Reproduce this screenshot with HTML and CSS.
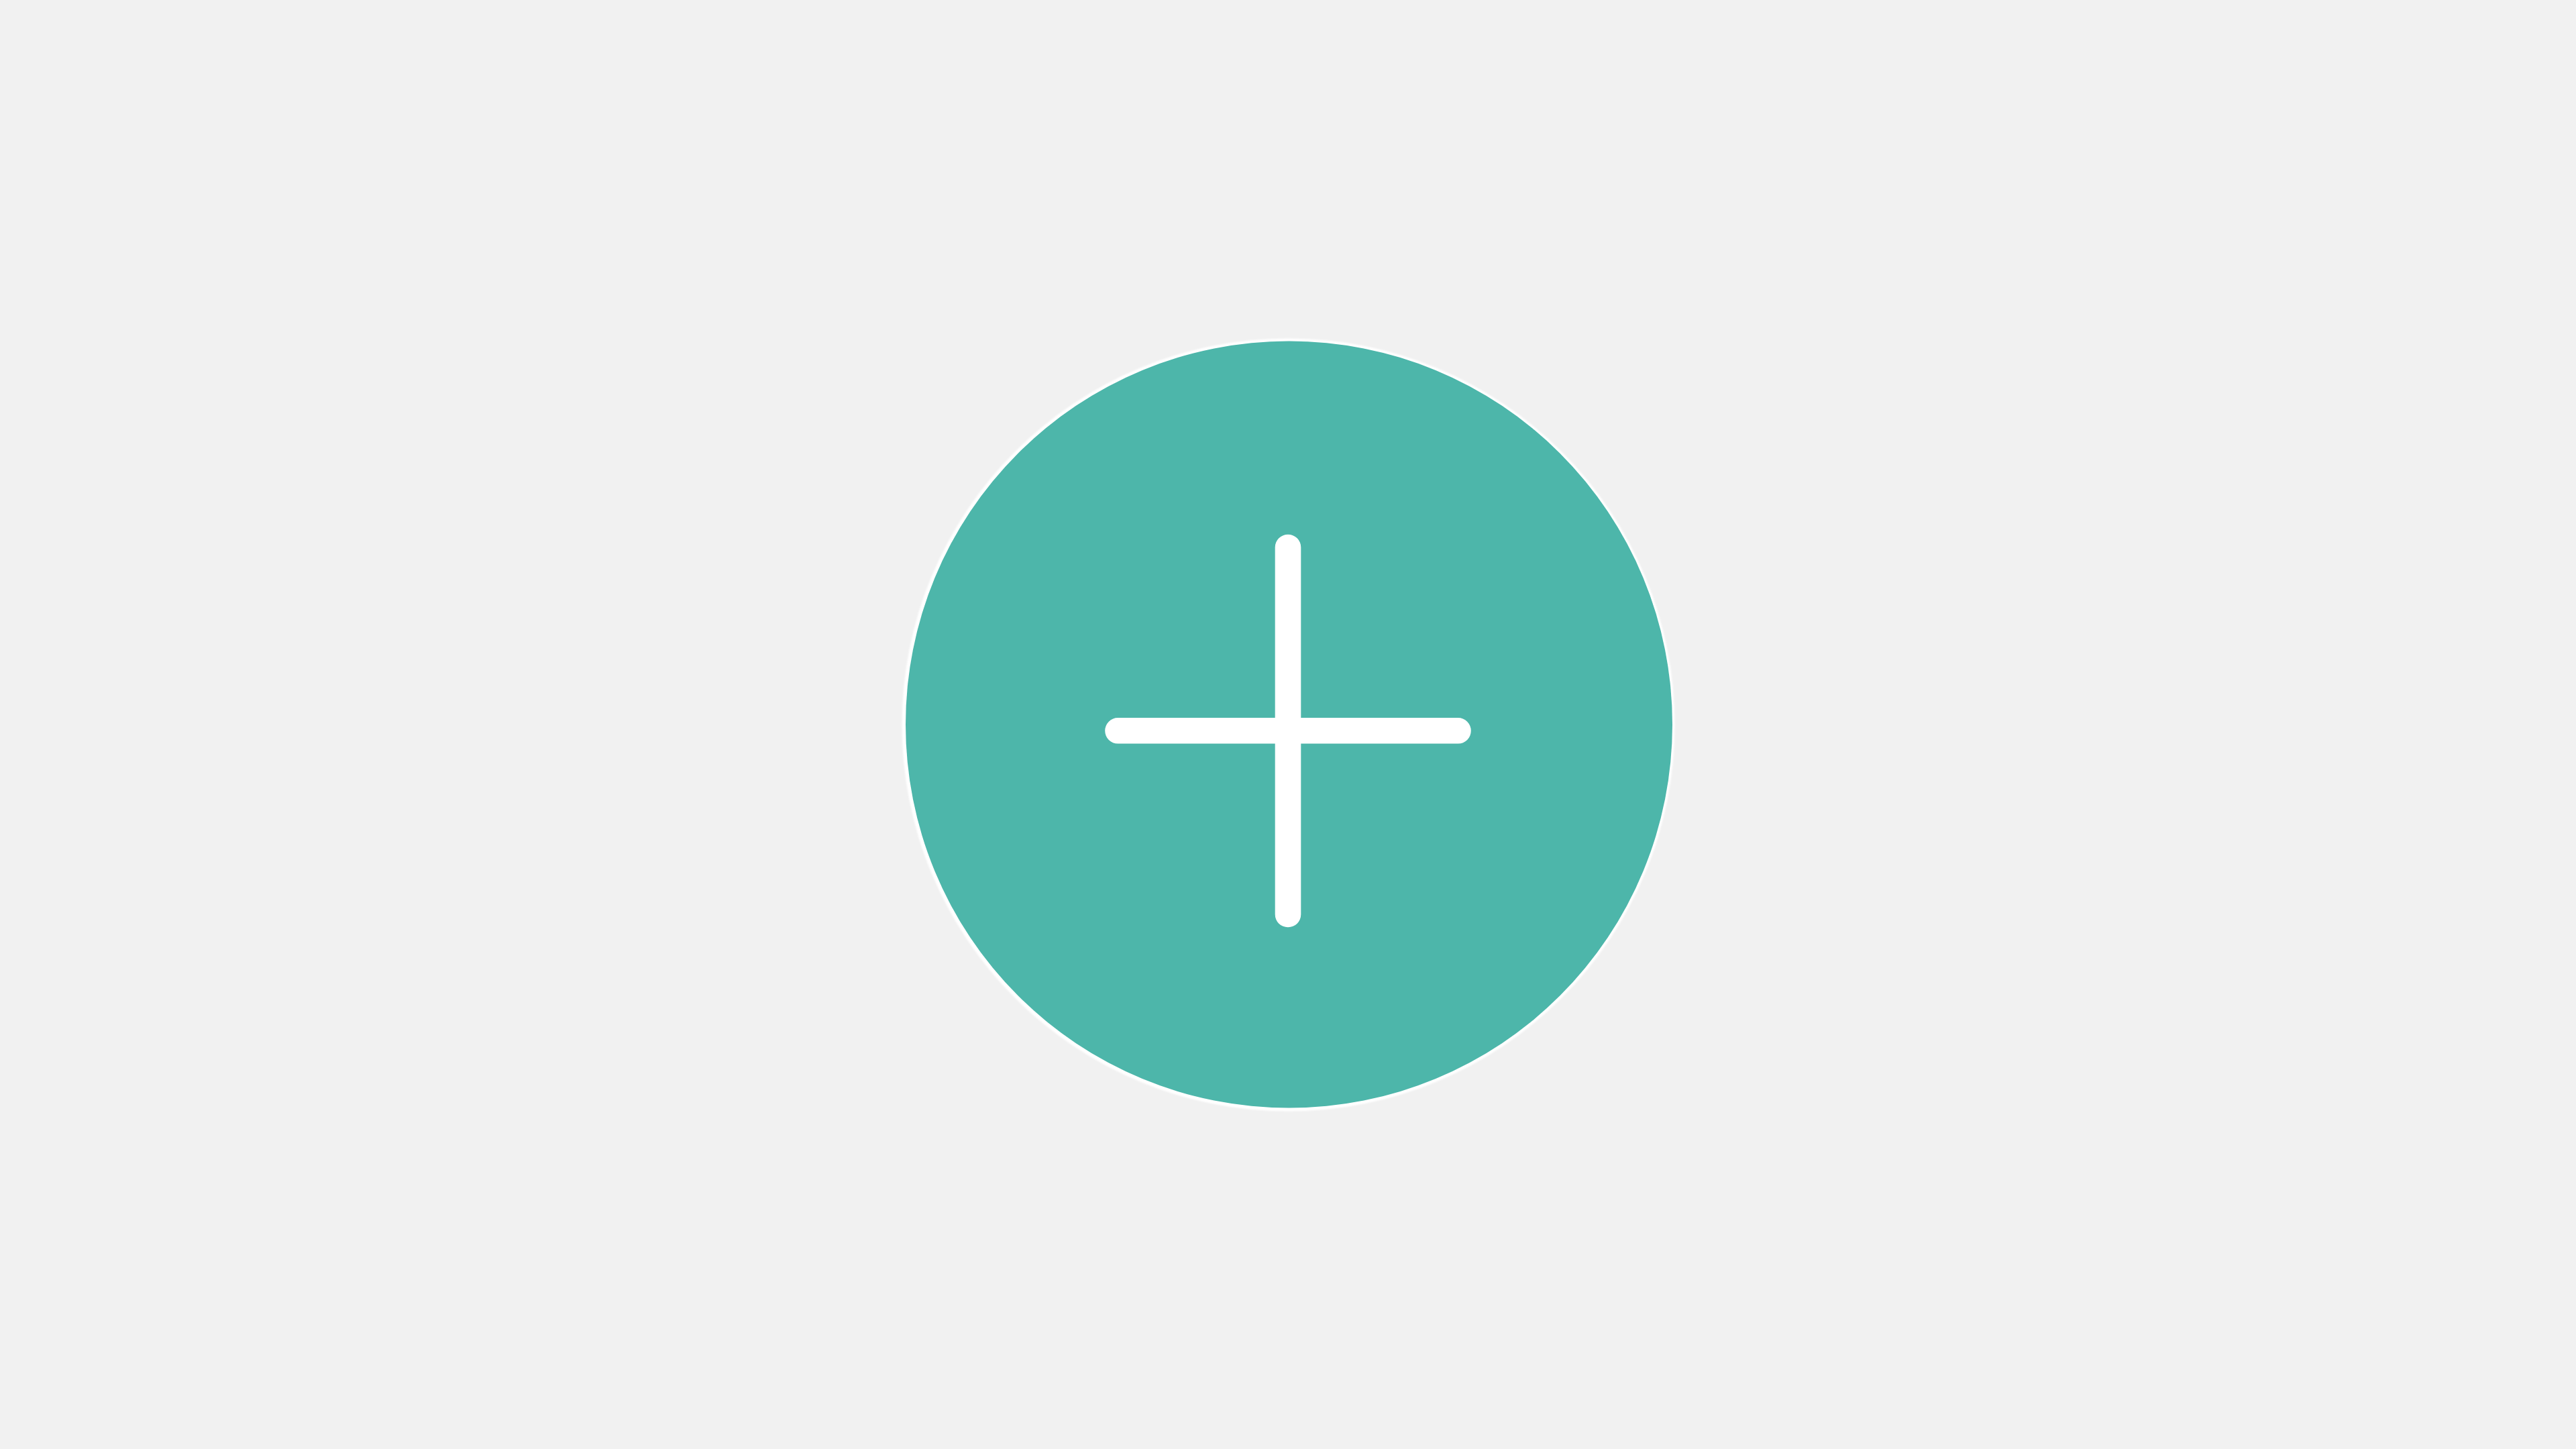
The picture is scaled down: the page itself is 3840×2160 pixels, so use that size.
FILE: index.html
```html
<!DOCTYPE html>
<html lang="en">
<head>
<meta charset="utf-8">
<title>Add</title>
<link rel="stylesheet" href="styles.css">
</head>
<body>
<main class="stage">
<svg class="add-icon" viewBox="0 0 3840 2160" role="img" aria-label="Add">
<defs><filter id="soft" x="-5%" y="-5%" width="110%" height="110%"><feGaussianBlur stdDeviation="1.2"/></filter></defs>
<circle class="halo" cx="1920.5" cy="1080.5" r="576" filter="url(#soft)"/>
<circle class="disc" cx="1921.5" cy="1080" r="571.5"/>
<path class="plus" d="M1920 816V1363M1666.5 1089.3H2173.5"/>
</svg>
</main>
</body>
</html>
```
FILE: styles.css
```css
html, body {
  margin: 0;
  padding: 0;
  height: 100%;
  background: #f1f1f1;
}
.stage {
  display: flex;
  width: 100%;
  height: 100vh;
  overflow: hidden;
}
.add-icon {
  display: block;
  width: 100%;
  height: 100%;
}
.halo { fill: #ffffff; }
.disc { fill: #4db6aa; }
.plus {
  fill: none;
  stroke: #fff;
  stroke-width: 38.6;
  stroke-linecap: round;
}
```
